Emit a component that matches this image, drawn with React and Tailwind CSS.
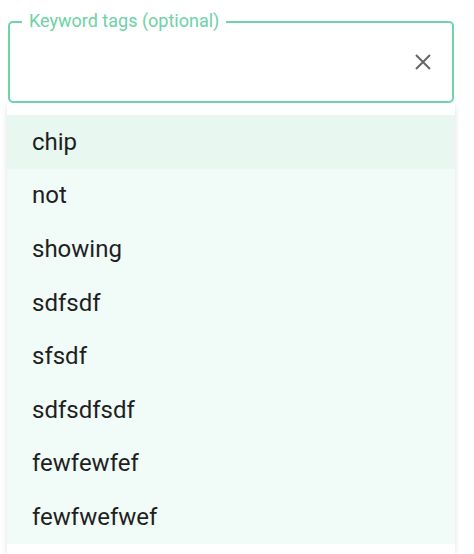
const items = ['chip', 'not', 'showing', 'sdfsdf', 'sfsdf', 'sdfsdfsdf', 'fewfewfef', 'fewfwefwef'];

export default function App() {
  return (
    <div className="min-h-screen bg-white font-['Roboto',sans-serif]">
      <div className="w-[446px] ml-[8px] pt-[21px]">
        <div className="relative h-[82px] rounded-[5px] border-2 border-[#6fd4aa] flex items-center justify-end pr-[20px]">
          <span className="absolute left-[12px] top-[-13px] bg-white px-[7px] text-[18px] leading-[22px] text-[#6dd2a6]">
            Keyword tags (optional)
          </span>
          <svg width="18" height="18" viewBox="0 0 18 18" className="text-[#666]">
            <path d="M2 2 L16 16 M16 2 L2 16" stroke="currentColor" strokeWidth="2" />
          </svg>
        </div>
      </div>
      <div className="w-[448px] ml-[7px] bg-white pt-[12px] pb-[10px] shadow-[0_2px_6px_rgba(0,0,0,0.12)]">
        {items.map((t, i) => (
          <div
            key={t}
            className={
              i === 0
                ? 'h-[53.6px] flex items-center pl-[25px] text-[24px] text-[#1f1f1f] bg-[#e8f8f1]'
                : 'h-[53.6px] flex items-center pl-[25px] text-[24px] text-[#1f1f1f] bg-[#f1fbf8]'
            }
          >
            {t}
          </div>
        ))}
      </div>
    </div>
  );
}
